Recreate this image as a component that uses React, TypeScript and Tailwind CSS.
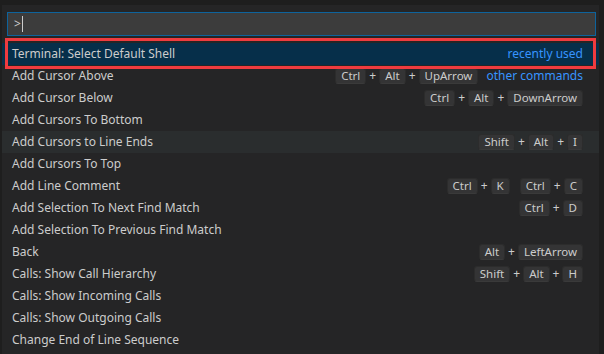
import React from "react";

type Row = {
  label: string;
  keys?: string[][];
  right?: string;
  hover?: boolean;
  selected?: boolean;
};

const rows: Row[] = [
  { label: "Terminal: Select Default Shell", right: "recently used", selected: true },
  { label: "Add Cursor Above", keys: [["Ctrl", "Alt", "UpArrow"]], right: "other commands" },
  { label: "Add Cursor Below", keys: [["Ctrl", "Alt", "DownArrow"]] },
  { label: "Add Cursors To Bottom" },
  { label: "Add Cursors to Line Ends", keys: [["Shift", "Alt", "I"]], hover: true },
  { label: "Add Cursors To Top" },
  { label: "Add Line Comment", keys: [["Ctrl", "K"], ["Ctrl", "C"]] },
  { label: "Add Selection To Next Find Match", keys: [["Ctrl", "D"]] },
  { label: "Add Selection To Previous Find Match" },
  { label: "Back", keys: [["Alt", "LeftArrow"]] },
  { label: "Calls: Show Call Hierarchy", keys: [["Shift", "Alt", "H"]] },
  { label: "Calls: Show Incoming Calls" },
  { label: "Calls: Show Outgoing Calls" },
  { label: "Change End of Line Sequence" },
];

function Key({ k }: { k: string }) {
  return (
    <span className="inline-flex items-center h-[16px] px-[5px] rounded-[3px] bg-[#343435] border border-[#2c2c2c] border-b-[#3a3a3a] text-[11.5px] leading-none text-[#cccccc]">
      {k}
    </span>
  );
}

function Chord({ parts }: { parts: string[] }) {
  return (
    <span className="inline-flex items-center">
      {parts.map((p, i) => (
        <React.Fragment key={i}>
          {i > 0 && <span className="px-[3px] text-[12px] text-[#cccccc]">+</span>}
          <Key k={p} />
        </React.Fragment>
      ))}
    </span>
  );
}

export default function App() {
  return (
    <div
      className="relative w-[604px] h-[354px] overflow-hidden bg-[#1e1e1e] flex"
      style={{ fontFamily: '"Noto Sans", "Open Sans", sans-serif' }}
    >
      <div className="ml-[2px] mt-[5px] w-[597px] h-[349px] bg-[#252526] flex flex-col">
        <div className="ml-[5px] mt-[7px] w-[589px] h-[24px] border border-[#0e639c] bg-[#3c3c3c] flex items-center pl-[6px]">
          <span className="text-[12px] text-[#cccccc] leading-none">&gt;</span>
          <span className="ml-[1px] w-[1px] h-[16px] bg-[#cccccc]" />
        </div>
        <div className="mt-[7px] flex flex-col">
          {rows.map((r, i) => (
            <div
              key={i}
              className={
                "h-[22px] flex items-center pl-[10px] pr-[16px] text-[12px] text-[#cccccc] " +
                (r.selected ? "bg-[#062f4a]" : r.hover ? "bg-[#2a2d2e]" : "")
              }
            >
              <span className="flex-1 whitespace-nowrap">{r.label}</span>
              {r.keys && (
                <span className="flex items-center gap-[10px]">
                  {r.keys.map((c, j) => (
                    <Chord key={j} parts={c} />
                  ))}
                </span>
              )}
              {r.right && (
                <span className="ml-[8px] text-[#3794ff] whitespace-nowrap">{r.right}</span>
              )}
            </div>
          ))}
        </div>
      </div>
      <div className="absolute left-[5px] top-[38px] w-[591px] h-[31px] border-[3px] border-[#ef3b3f]" />
    </div>
  );
}
